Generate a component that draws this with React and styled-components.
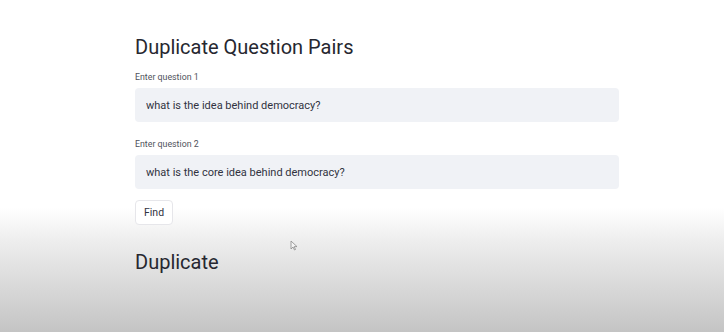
import styled, { createGlobalStyle } from "styled-components";

const GlobalStyle = createGlobalStyle`
  html, body {
    margin: 0;
    padding: 0;
  }
  body {
    min-height: 332px;
    font-family: Roboto, "Noto Sans", sans-serif;
    color: #31333f;
    background: linear-gradient(180deg, #ffffff 0px, #ffffff 208px, #eeeeee 240px, #c4c4c4 332px);
  }
`;

const Page = styled.main`
  width: 484px;
  margin: 0 auto 0 135px;
  padding-top: 35px;
  display: flex;
  flex-direction: column;
  position: relative;
`;

const Title = styled.h1`
  margin: 0;
  font-size: 20px;
  font-weight: 400;
  line-height: 24px;
  color: #262730;
`;

const Field = styled.div`
  display: flex;
  flex-direction: column;
  margin-top: ${({ first }) => (first ? "12px" : "16px")};
`;

const Label = styled.label`
  font-size: 8.8px;
  line-height: 12px;
  color: #4f525c;
  margin-bottom: 5px;
`;

const Input = styled.input`
  box-sizing: border-box;
  height: 34px;
  border: none;
  border-radius: 4px;
  background: #f0f2f6;
  padding: 0 11px;
  font-family: inherit;
  font-size: 11px;
  color: #31333f;
  outline: none;
`;

const Button = styled.button`
  align-self: flex-start;
  margin-top: 11px;
  height: 25px;
  padding: 0 8px;
  border: 1px solid #e6e6ea;
  border-radius: 4px;
  background: #ffffff;
  font-family: inherit;
  font-size: 10.5px;
  color: #31333f;
`;

const Result = styled.h2`
  margin: 25px 0 0;
  font-size: 20px;
  font-weight: 400;
  line-height: 24px;
  color: #262730;
`;

const Cursor = styled.svg`
  position: absolute;
  left: 155px;
  top: 240px;
`;

export default function App() {
  return (
    <>
      <GlobalStyle />
      <Page>
        <Title>Duplicate Question Pairs</Title>
        <Field first>
          <Label>Enter question 1</Label>
          <Input defaultValue="what is the idea behind democracy?" />
        </Field>
        <Field>
          <Label>Enter question 2</Label>
          <Input defaultValue="what is the core idea behind democracy?" />
        </Field>
        <Button>Find</Button>
        <Result>Duplicate</Result>
        <Cursor width="8" height="11" viewBox="0 0 8 11">
          <path d="M1 1 L1 9 L3 7 L4.5 10 L5.5 9.5 L4.2 6.6 L7 6.6 Z" fill="#f4f4f4" stroke="#8a8a8a" strokeWidth="0.8" />
        </Cursor>
      </Page>
    </>
  );
}
